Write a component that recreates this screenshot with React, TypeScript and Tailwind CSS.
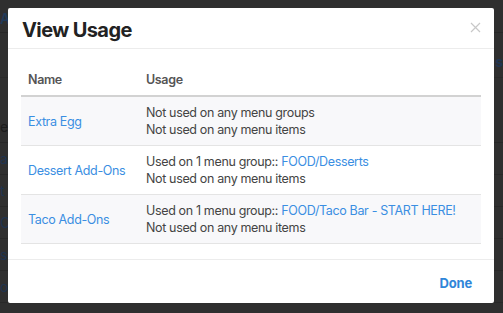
import React from 'react';

type Usage = { text: string; link?: string };
type Row = { name: string; usage: Usage[] };

const rows: Row[] = [
  {
    name: 'Extra Egg',
    usage: [{ text: 'Not used on any menu groups' }, { text: 'Not used on any menu items' }],
  },
  {
    name: 'Dessert Add-Ons',
    usage: [{ text: 'Used on 1 menu group:: ', link: 'FOOD/Desserts' }, { text: 'Not used on any menu items' }],
  },
  {
    name: 'Taco Add-Ons',
    usage: [
      { text: 'Used on 1 menu group:: ', link: 'FOOD/Taco Bar - START HERE!' },
      { text: 'Not used on any menu items' },
    ],
  },
];

function BackgroundPage() {
  // faint page behind the overlay
  return (
    <div className="flex flex-col h-full">
      <div className="h-[33px] border-b border-[#272727] pl-0 pt-[12px] text-[14px] font-semibold text-[#1f3a5a] leading-none">
        A
      </div>
      <div className="h-[45px] border-b border-[#2a2a2a] flex justify-end items-end pb-[8px] pr-[0px] text-[14px] font-bold text-[#203552] leading-none">
        s
      </div>
      <div className="h-[65px] border-b border-[#272727] flex items-end pb-[8px] text-[14px] text-[#1c1c1c] leading-none">
        e
      </div>
      {['a', 't', 'C', 'se', 'o'].map((t, i) => (
        <div
          key={i}
          className="h-[32px] border-b border-[#282828] flex items-center text-[14px] text-[#1e3350] leading-none"
        >
          {t}
        </div>
      ))}
    </div>
  );
}

export default function App() {
  return (
    <div
      className="relative w-[503px] h-[313px] bg-[#2f2f2f] overflow-hidden"
      style={{ fontFamily: 'Inter, "Noto Sans", sans-serif' }}
    >
      <BackgroundPage />

      <div className="absolute left-[8px] top-[8px] w-[486px] h-[295px] bg-white rounded-[2px] flex flex-col">
        {/* header */}
        <div className="h-[41px] border-b border-[#ececec] flex items-center justify-between pl-[14px] pr-[13px] pt-[3px] shrink-0">
          <h2 className="text-[20px] font-bold text-[#222] tracking-[-0.6px]">View Usage</h2>
          <svg width="11" height="11" viewBox="0 0 11 11" className="mt-[-5px]">
            <path d="M1 1L10 10M10 1L1 10" stroke="#c8c8c8" strokeWidth="1.2" />
          </svg>
        </div>

        {/* body */}
        <div className="px-[13px] pt-[14px] pb-[15px] flex-1">
          <table className="w-full border-collapse text-[12.5px] tracking-[-0.35px]">
            <thead>
              <tr className="border-b-2 border-[#d2d2d2]">
                <th className="h-[33px] pt-[3px] pl-[7px] w-[125px] text-left font-semibold text-[#555]">Name</th>
                <th className="h-[33px] pt-[3px] text-left font-semibold text-[#555]">Usage</th>
              </tr>
            </thead>
            <tbody>
              {rows.map((r, i) => (
                <tr
                  key={r.name}
                  className={`border-b border-[#e4e4e4] ${i % 2 === 0 ? 'bg-[#f8f8fa]' : 'bg-white'}`}
                >
                  <td className="pl-[7px] pt-[2px] align-middle text-[#3a8ee2]">{r.name}</td>
                  <td className="py-[7px] leading-[17px] text-[#444]">
                    {r.usage.map((u, j) => (
                      <div key={j}>
                        {u.text}
                        {u.link && <span className="text-[#3a8ee2]">{u.link}</span>}
                      </div>
                    ))}
                  </td>
                </tr>
              ))}
            </tbody>
          </table>
        </div>

        {/* footer */}
        <div className="h-[45px] border-t border-[#ececec] flex items-center justify-end pr-[22px] pt-[3px] shrink-0">
          <button className="text-[13px] font-bold text-[#2f86d9] tracking-[-0.2px]">Done</button>
        </div>
      </div>
    </div>
  );
}
